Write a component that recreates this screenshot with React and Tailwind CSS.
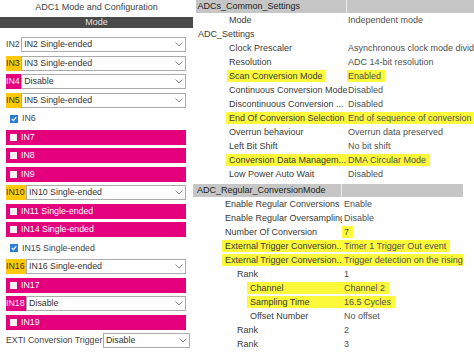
import React from 'react';

// ─────────────────────────────────────────────
// Left panel data
// ─────────────────────────────────────────────
const channels = [
    { t: 'sel', label: 'IN2', value: 'IN2 Single-ended' },
    { t: 'sel', label: 'IN3', value: 'IN3 Single-ended', tag: 'y' },
    { t: 'sel', label: 'IN4', value: 'Disable', tag: 'm' },
    { t: 'sel', label: 'IN5', value: 'IN5 Single-ended', tag: 'y' },
    { t: 'chk', label: 'IN6' },
    { t: 'bar', label: 'IN7' },
    { t: 'bar', label: 'IN8' },
    { t: 'bar', label: 'IN9' },
    { t: 'sel', label: 'IN10', value: 'IN10 Single-ended', tag: 'y' },
    { t: 'bar', label: 'IN11 Single-ended' },
    { t: 'bar', label: 'IN14 Single-ended' },
    { t: 'chk', label: 'IN15 Single-ended' },
    { t: 'sel', label: 'IN16', value: 'IN16 Single-ended', tag: 'y' },
    { t: 'bar', label: 'IN17' },
    { t: 'sel', label: 'IN18', value: 'Disable', tag: 'm' },
    { t: 'bar', label: 'IN19' },
];

// ─────────────────────────────────────────────
// Right panel data
// ─────────────────────────────────────────────
const commonRows = [
    { label: 'Mode', value: 'Independent mode', lvl: 1 },
    { label: 'ADC_Settings', value: '', lvl: 0 },
    { label: 'Clock Prescaler', value: 'Asynchronous clock mode divided by 1', lvl: 1 },
    { label: 'Resolution', value: 'ADC 14-bit resolution', lvl: 1 },
    { label: 'Scan Conversion Mode', value: 'Enabled', lvl: 1, hl: 'text' },
    { label: 'Continuous Conversion Mode', value: 'Disabled', lvl: 1 },
    { label: 'Discontinuous Conversion ...', value: 'Disabled', lvl: 1 },
    { label: 'End Of Conversion Selection', value: 'End of sequence of conversion', lvl: 1, hl: 'full' },
    { label: 'Overrun behaviour', value: 'Overrun data preserved', lvl: 1 },
    { label: 'Left Bit Shift', value: 'No bit shift', lvl: 1 },
    { label: 'Conversion Data Managem...', value: 'DMA Circular Mode', lvl: 1, hl: 'full' },
    { label: 'Low Power Auto Wait', value: 'Disabled', lvl: 1 },
];

const regularRows = [
    { label: 'Enable Regular Conversions', value: 'Enable', lvl: 1 },
    { label: 'Enable Regular Oversampling', value: 'Disable', lvl: 1 },
    { label: 'Number Of Conversion', value: '7', lvl: 1, hl: 'value' },
    { label: 'External Trigger Conversion...', value: 'Timer 1 Trigger Out event', lvl: 1, hl: 'full' },
    { label: 'External Trigger Conversion...', value: 'Trigger detection on the rising edge', lvl: 1, hl: 'full' },
    { label: 'Rank', value: '1', lvl: 2 },
    { label: 'Channel', value: 'Channel 2', lvl: 3, hl: 'full' },
    { label: 'Sampling Time', value: '16.5 Cycles', lvl: 3, hl: 'full' },
    { label: 'Offset Number', value: 'No offset', lvl: 3 },
    { label: 'Rank', value: '2', lvl: 2 },
    { label: 'Rank', value: '3', lvl: 2 },
    { label: 'Rank', value: '4', lvl: 2 },
];

const commonIndent = { 0: 'pl-[2px]', 1: 'pl-[33px]' };
const regularIndent = { 1: 'pl-[32px]', 2: 'pl-[44px]', 3: 'pl-[57px]' };

const Chevron = () => (
    <svg width="8" height="5" viewBox="0 0 8 5" className="shrink-0">
        <polyline points="0.5,0.5 4,4 7.5,0.5" fill="none" stroke="#8a8a8a" strokeWidth="1" />
    </svg>
);

const Select = ({ value }) => (
    <div className="flex-1 h-full border border-[#ababab] bg-white flex items-center justify-between pl-[2px] pr-[2px] text-[#333]">
        <span className="whitespace-nowrap">{value}</span>
        <Chevron />
    </div>
);

const ChannelRow = ({ ch }) => {
    if (ch.t === 'bar') {
        return (
            <div className="h-[15px] bg-[#e4007c] flex items-center pl-[4px] gap-[4px] text-white">
                <div className="w-[7px] h-[7px] bg-[#f2f2f2]" />
                <span className="whitespace-nowrap">{ch.label}</span>
            </div>
        );
    }
    if (ch.t === 'chk') {
        return (
            <div className="h-[15px] flex items-center pl-[4px] gap-[4px] text-[#444]">
                <div className="w-[8px] h-[8px] bg-[#2a7fd4] flex items-center justify-center">
                    <svg width="6" height="6" viewBox="0 0 6 6">
                        <polyline points="0.8,3 2.4,4.6 5.3,1.2" fill="none" stroke="white" strokeWidth="1.2" />
                    </svg>
                </div>
                <span className="whitespace-nowrap">{ch.label}</span>
            </div>
        );
    }
    const tagCls =
        ch.tag === 'y' ? 'bg-[#fdc90a] text-[#333]' : ch.tag === 'm' ? 'bg-[#e4007c] text-white' : 'text-[#444]';
    return (
        <div className="h-[15px] flex items-center">
            <span className={`h-full flex items-center pr-[1.5px] whitespace-nowrap ${tagCls}`}>{ch.label}</span>
            <Select value={ch.value} />
        </div>
    );
};

// ─────────────────────────────────────────────
// Property row
// ─────────────────────────────────────────────
const PropRow = ({ r, labelW, indent, valuePad }) => {
    const hl = 'bg-[#fcf93a]';
    return (
        <div className="flex h-[14px] items-center">
            <div className={`${labelW} ${indent} shrink-0 h-full flex items-center overflow-hidden whitespace-nowrap text-[#3a3a3a]`}>
                {r.hl === 'full' ? (
                    <span className={`flex-1 h-[12px] -ml-[3px] pl-[3px] flex items-center ${hl}`}>{r.label}</span>
                ) : r.hl === 'text' ? (
                    <span className={`h-[12px] -ml-[2px] px-[2px] flex items-center ${hl}`}>{r.label}</span>
                ) : (
                    <span>{r.label}</span>
                )}
            </div>
            <div className={`flex-1 h-full flex items-center overflow-hidden whitespace-nowrap text-[#505050] ${valuePad}`}>
                {r.hl === 'full' ? (
                    <span className={`h-[12px] -ml-[2px] pl-[2px] pr-[4px] flex items-center ${hl}`}>{r.value}</span>
                ) : r.hl === 'text' || r.hl === 'value' ? (
                    <span className={`h-[12px] -ml-[4px] px-[4px] flex items-center ${hl}`}>{r.value}</span>
                ) : (
                    <span>{r.value}</span>
                )}
            </div>
        </div>
    );
};

// ─────────────────────────────────────────────
// Main
// ─────────────────────────────────────────────
export default function App() {
    return (
        <div className="w-[474px] h-[354px] overflow-hidden bg-white flex font-['Liberation_Sans',Arial,sans-serif] text-[8.8px] leading-none">
            {/* Left: ADC1 Mode and Configuration */}
            <div className="w-[193px] shrink-0 flex flex-col">
                <div className="h-[14px] flex items-center justify-center text-[#444] text-[9px]">
                    ADC1 Mode and Configuration
                </div>
                <div className="mt-[3px] h-[11px] bg-[#4a4a4a] flex items-center justify-center text-[#e2e2e2] text-[9px]">
                    Mode
                </div>
                <div className="mt-[9px] flex flex-col gap-[3.5px] pl-[6px] pr-[7px]">
                    {channels.map((ch, i) => (
                        <ChannelRow key={i} ch={ch} />
                    ))}
                </div>
                <div className="mt-[3.5px] h-[15px] flex items-center pl-[6px] pr-[3px] text-[#444]">
                    <span className="flex-1 whitespace-nowrap overflow-hidden">EXTI Conversion Trigger</span>
                    <div className="w-[87px] h-full flex">
                        <Select value="Disable" />
                    </div>
                </div>
            </div>

            {/* Right: settings tables */}
            <div className="flex-1 flex flex-col overflow-hidden text-[9px]">
                <div className="ml-[3px]">
                    <div className="h-[13px] bg-[#c6c6c6] flex text-[#222]">
                        <div className="w-[151px] h-full border-r border-[#e8e8e8] pl-[1.5px] flex items-center whitespace-nowrap">
                            ADCs_Common_Settings
                        </div>
                    </div>
                    {commonRows.map((r, i) => (
                        <PropRow key={i} r={r} labelW="w-[151px]" indent={commonIndent[r.lvl]} valuePad="pl-[1px]" />
                    ))}
                </div>

                <div className="mt-[3px] w-[270px]">
                    <div className="h-[13px] bg-[#c6c6c6] flex text-[#222]">
                        <div className="w-[149px] h-full border-r border-[#e8e8e8] pl-[4px] flex items-center whitespace-nowrap">
                            ADC_Regular_ConversionMode
                        </div>
                    </div>
                    {regularRows.map((r, i) => (
                        <PropRow key={i} r={r} labelW="w-[149px]" indent={regularIndent[r.lvl]} valuePad="pl-[2px]" />
                    ))}
                </div>
            </div>
        </div>
    );
}
